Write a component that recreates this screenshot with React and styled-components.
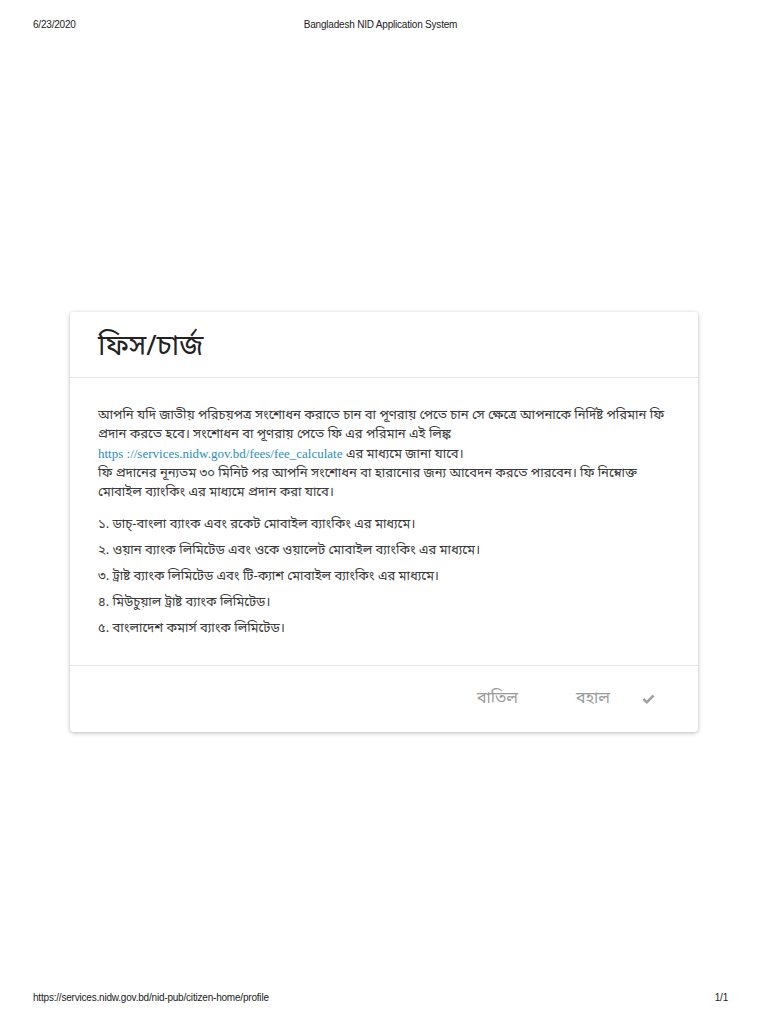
import React from "react";
import styled, { createGlobalStyle } from "styled-components";

const Global = createGlobalStyle`
  html, body { margin: 0; padding: 0; background: #fff; }
  body { font-family: "Liberation Sans", Arial, sans-serif; }
`;

const Page = styled.div`
  width: 768px;
  height: 1024px;
  display: flex;
  flex-direction: column;
  background: #fff;
`;

const PrintBar = styled.div`
  display: grid;
  grid-template-columns: 1fr auto 1fr;
  align-items: center;
  padding: 0 40px 0 33px;
  height: ${(p) => p.$h}px;
  font-family: "Liberation Sans", Arial, sans-serif;
  font-size: 10px;
  color: #222;
  letter-spacing: -0.2px;
`;

const Right = styled.span`
  justify-self: end;
`;

const Middle = styled.div`
  flex: 1;
  display: flex;
  flex-direction: column;
  padding: 0 70px;
  padding-top: ${(p) => p.$top}px;
`;

const Card = styled.div`
  background: #fff;
  border-radius: 4px;
  box-shadow: 0 1px 4px rgba(0, 0, 0, 0.28);
  font-family: "Noto Sans Bengali", "Noto Serif Bengali", "Lohit Bengali", "Noto Sans", sans-serif;
`;

const Header = styled.div`
  padding: 17px 28px 10px;
  border-bottom: 1px solid #e6e6e6;
`;

const Title = styled.h2`
  margin: 0;
  font-size: 28px;
  font-weight: 400;
  color: #222;
  line-height: 38px;
`;

const Body = styled.div`
  padding: 28px 28px 23px;
  color: #3a3a3a;
  font-size: 13px;
  border-bottom: 1px solid #e6e6e6;
`;

const Para = styled.p`
  margin: 0;
  line-height: 19px;
`;

const Link = styled.a`
  color: #2a8fbd;
  text-decoration: none;
  font-family: "Liberation Serif", "Times New Roman", serif;
`;

const List = styled.div`
  margin-top: 10px;
  display: flex;
  flex-direction: column;
`;

const Item = styled.div`
  line-height: 26px;
`;

const Footer = styled.div`
  display: flex;
  justify-content: flex-end;
  align-items: center;
  height: 66px;
  padding-right: 43px;
`;

const Action = styled.button`
  background: none;
  border: none;
  font-family: inherit;
  font-size: 16px;
  color: #9a9a9a;
  padding: 0;
  margin-left: ${(p) => p.$gap}px;
  cursor: pointer;
  display: flex;
  align-items: center;
`;

const Check = () => (
  <svg width="13" height="11" viewBox="0 0 13 11" fill="#a0a0a0">
    <path d="M0.5 5.8 2.3 4 4.8 6.5 10.7 0.6 12.5 2.4 4.8 10.1z" />
  </svg>
);

export default function App() {
  const items = [
    "১. ডাচ্-বাংলা ব্যাংক এবং রকেট মোবাইল ব্যাংকিং এর মাধ্যমে।",
    "২. ওয়ান ব্যাংক লিমিটেড এবং ওকে ওয়ালেট মোবাইল ব্যাংকিং এর মাধ্যমে।",
    "৩. ট্রাষ্ট ব্যাংক লিমিটেড এবং টি-ক্যাশ মোবাইল ব্যাংকিং এর মাধ্যমে।",
    "৪. মিউচুয়াল ট্রাষ্ট ব্যাংক লিমিটেড।",
    "৫. বাংলাদেশ কমার্স ব্যাংক লিমিটেড।",
  ];
  return (
    <Page>
      <Global />
      <PrintBar $h={48}>
        <span>6/23/2020</span>
        <span>Bangladesh NID Application System</span>
        <Right />
      </PrintBar>
      <Middle $top={264}>
        <Card>
          <Header>
            <Title>ফিস/চার্জ</Title>
          </Header>
          <Body>
            <Para>
              আপনি যদি জাতীয় পরিচয়পত্র সংশোধন করাতে চান বা পূণরায় পেতে চান সে ক্ষেত্রে আপনাকে নির্দিষ্ট পরিমান ফি
              প্রদান করতে হবে। সংশোধন বা পূণরায় পেতে ফি এর পরিমান এই লিঙ্ক
              <br />
              <Link>https ://services.nidw.gov.bd/fees/fee_calculate</Link> এর মাধ্যমে জানা যাবে।
              <br />
              ফি প্রদানের নূন্যতম ৩০ মিনিট পর আপনি সংশোধন বা হারানোর জন্য আবেদন করতে পারবেন। ফি নিম্নোক্ত
              মোবাইল ব্যাংকিং এর মাধ্যমে প্রদান করা যাবে।
            </Para>
            <List>
              {items.map((t) => (
                <Item key={t}>{t}</Item>
              ))}
            </List>
          </Body>
          <Footer>
            <Action $gap={0}>বাতিল</Action>
            <Action $gap={58}>বহাল</Action>
            <Action $gap={32}>
              <Check />
            </Action>
          </Footer>
        </Card>
      </Middle>
      <PrintBar $h={54}>
        <span>https://services.nidw.gov.bd/nid-pub/citizen-home/profile</span>
        <span />
        <Right>1/1</Right>
      </PrintBar>
    </Page>
  );
}
